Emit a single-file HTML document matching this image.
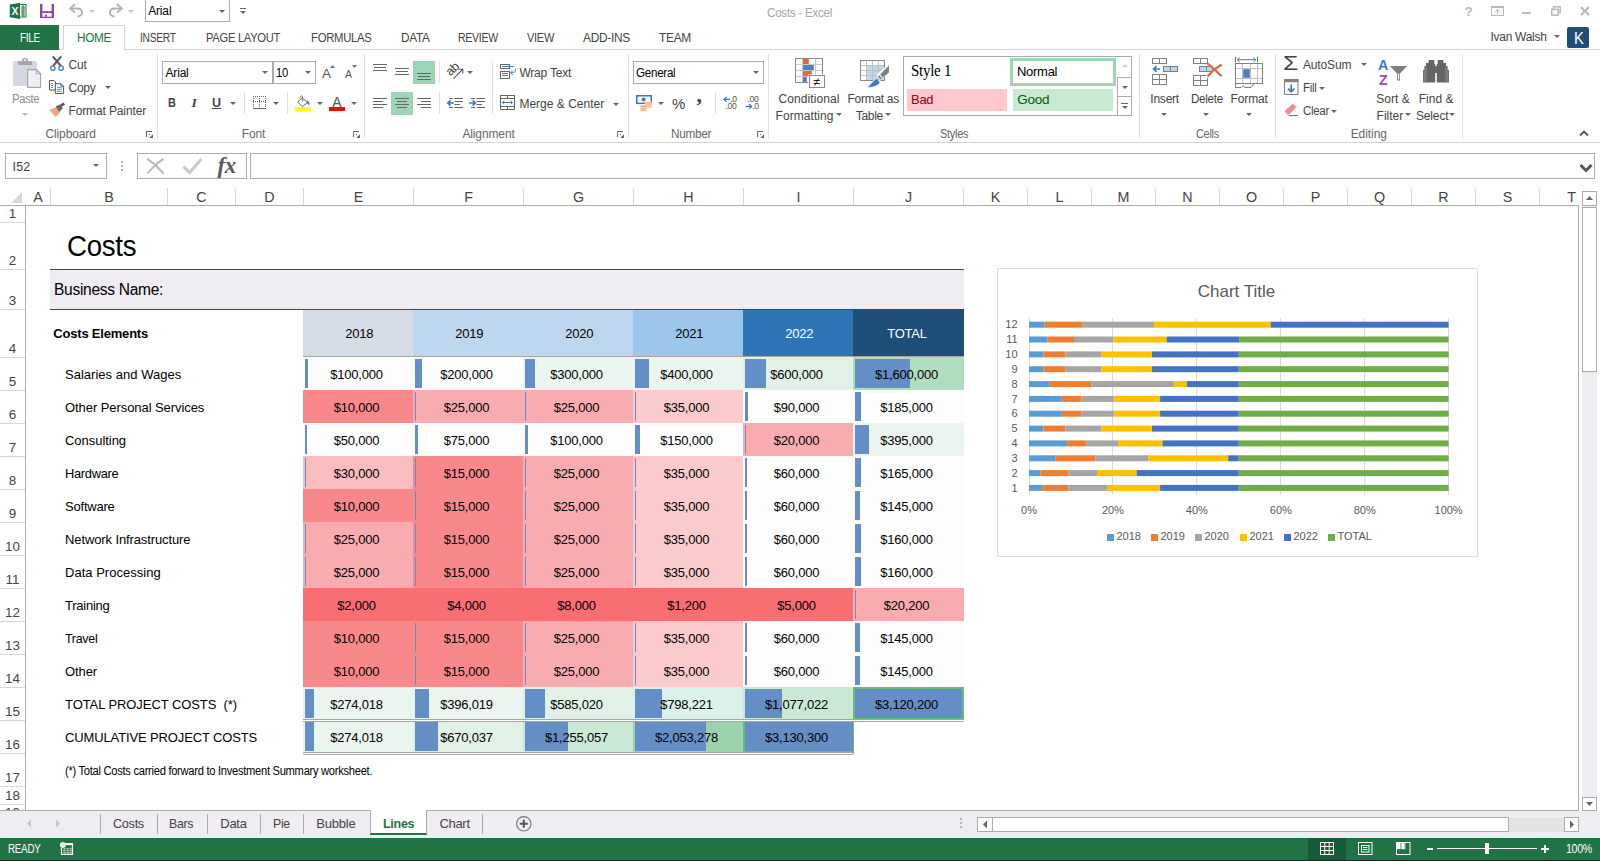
<!DOCTYPE html>
<html lang="en"><head><meta charset="utf-8"><title>Costs - Excel</title>
<style>
*{box-sizing:border-box;margin:0;padding:0}
html,body{width:1600px;height:861px;overflow:hidden;background:#fff}
body{font-family:"Liberation Sans",sans-serif;font-size:12px;color:#444}
#app{position:relative;width:1600px;height:861px;overflow:hidden;background:#fff}
.a{position:absolute}
.t{position:absolute;white-space:nowrap;line-height:1}
svg{position:absolute;overflow:visible}
/* ribbon */
.tabline{position:absolute;left:0;top:49px;width:1600px;height:1px;background:#d4d4d4}
.filetab{position:absolute;left:0;top:25px;width:59px;height:25px;background:#217346}
.hometab{position:absolute;left:63px;top:25px;width:62px;height:25px;background:#fff;border:1px solid #d4d4d4;border-bottom:none}
.ribline{position:absolute;left:0;top:142px;width:1600px;height:1px;background:#d4d4d4}
.gsep{position:absolute;top:54px;width:1px;height:85px;background:#e1e1e1}
.ssep{position:absolute;width:1px;background:#e1e1e1}
.box{position:absolute;background:#fff;border:1px solid #ababab}
.hl{position:absolute;background:#9fd5b7}
.arr{position:absolute;width:0;height:0;border-left:3px solid transparent;border-right:3px solid transparent;border-top:3px solid #6a6a6a}
/* grid */
#grid{position:absolute;left:0;top:0;width:1600px;height:861px}
.colhdr{position:absolute;left:0;top:188px;width:1579px;height:18px;border-bottom:1px solid #ababab}
.ch{position:absolute;top:0;height:17px;border-right:1px solid #d6d6d6;text-align:center;font-size:14.3px;line-height:19px;color:#444}
.corner{position:absolute;left:0;top:188px;width:26px;height:18px}
.rowhdr{position:absolute;left:0;top:0;width:26px;height:810px;border-right:1px solid #ababab;clip-path:inset(206px 0 0 0)}
.rh{position:absolute;left:0;width:25px;border-bottom:1px solid #d6d6d6;text-align:center;font-size:13.4px;color:#444}
.rh span{position:absolute;left:0;right:0;bottom:0px;line-height:17px;text-align:center}
.sheetborder-r{position:absolute;left:1578px;top:205px;width:1px;height:606px;background:#ababab}
.sheetborder-b{position:absolute;left:0;top:810px;width:1579px;height:1px;background:#ababab}
.t-costs{position:absolute;left:66px;top:229px;font-size:27px;line-height:32px;color:#000;letter-spacing:-0.3px}
.bn-band{position:absolute;left:50px;top:269px;width:914px;height:41px;background:#efedf1;border-top:1px solid #1f4e79;border-bottom:1px solid #1f4e79}
.bn-text{position:absolute;left:54px;top:279px;font-size:16px;line-height:20px;color:#000}
.cell{position:absolute}
.ce{left:53px;top:325px;font-size:13.33px;font-weight:bold;color:#000;line-height:16px}
.yh{position:absolute;top:310px;height:47px;text-align:center;font-size:13px;line-height:47px;letter-spacing:-0.2px;padding-left:1.4px}
.yh-line{position:absolute;left:303px;top:356px;width:661px;height:1px;background:#a6a6a6}
.lbl{position:absolute;left:65px;height:33px;line-height:34px;font-size:13.33px;color:#000;white-space:nowrap}
.v{position:absolute;height:34px;text-align:center;font-size:13px;line-height:36px;color:#000;letter-spacing:-0.2px}
.v i{position:absolute;left:2px;top:2px;height:29px;background:#638ec6}
.v b{position:relative;font-weight:normal;left:-2px}
.dbl{position:absolute;height:3px;border-top:1px solid #a6a6a6;border-bottom:1px solid #a6a6a6;background:#fff}
.note{position:absolute;left:65px;top:763px;font-size:12px;line-height:16px;color:#000;letter-spacing:-0.45px}
.chart .ct{font-size:11px;fill:#595959;font-family:"Liberation Sans",sans-serif}
.chart .ctitle{font-size:17px;fill:#595959;font-family:"Liberation Sans",sans-serif}

</style></head>
<body>
<div id="app">
<div id="titlebar">
<svg style="left:9px;top:2px" width="18" height="18" viewBox="0 0 18 18"><rect x="10.5" y="2.5" width="6.5" height="12.5" fill="#fff" stroke="#217346" stroke-width="1"/><path d="M12 5H16M12 7H16M12 9H16M12 11H16M12 13H16M14 3V15" stroke="#217346" stroke-width="0.9"/><path d="M0.8 2.4 L11 0.8 V16.9 L0.8 15.2 Z" fill="#217346"/><text x="6" y="12.9" text-anchor="middle" font-size="10.5" font-weight="700" fill="#fff" font-family="Liberation Sans,sans-serif">X</text></svg>
<svg style="left:40px;top:4px" width="14" height="14" viewBox="0 0 14 14"><rect x="0" y="0" width="14" height="14" fill="#8c46a5"/><rect x="2.4" y="0" width="9.2" height="7.2" fill="#fff"/><rect x="2.4" y="9" width="9.2" height="3.7" fill="#fff"/><rect x="5" y="10.8" width="2.1" height="1.9" fill="#8c46a5"/></svg>
<svg style="left:68px;top:3px" width="16" height="15" viewBox="0 0 16 15"><path d="M7 1.2 L2.2 5.4 L7 9.4" fill="none" stroke="#b4b4b4" stroke-width="2"/><path d="M2.6 5.4 H9.2 C15.6 5.4 15.6 13.4 9.4 13.4" fill="none" stroke="#b4b4b4" stroke-width="2"/></svg>
<svg style="left:108px;top:3px" width="16" height="15" viewBox="0 0 16 15"><path d="M9 1.2 L13.8 5.4 L9 9.4" fill="none" stroke="#b4b4b4" stroke-width="2"/><path d="M13.4 5.4 H6.8 C0.4 5.4 0.4 13.4 6.6 13.4" fill="none" stroke="#b4b4b4" stroke-width="2"/></svg>
<svg style="left:88.5px;top:9.5px" width="6" height="3" viewBox="0 0 6 3"><path d="M0 0H6L3 3Z" fill="#c2c2c2"/></svg>
<svg style="left:128.3px;top:9.5px" width="6" height="3" viewBox="0 0 6 3"><path d="M0 0H6L3 3Z" fill="#c2c2c2"/></svg>
<div class="box" style="left:145px;top:-1px;width:85px;height:23px"></div>
<span class="t" style="left:148.2px;top:5.4px;font-size:12px;color:#000;letter-spacing:-0.16px;">Arial</span>
<svg style="left:219.3px;top:9.5px" width="6" height="3" viewBox="0 0 6 3"><path d="M0 0H6L3 3Z" fill="#666"/></svg>
<svg style="left:240px;top:8px" width="6" height="7" viewBox="0 0 6 7"><path d="M0 0.5H6" stroke="#666" stroke-width="1"/><path d="M0 3H6L3 6Z" fill="#666"/></svg>
<span class="t" style="left:766.6px;top:7.2px;font-size:12.6px;color:#a6a6aa;letter-spacing:-0.30px;transform:scaleX(0.926);transform-origin:0 0;">Costs - Excel</span>
<span class="t" style="left:1464.6px;top:4.6px;font-size:13.5px;font-weight:700;color:#b9b9b9">?</span><svg style="left:1491px;top:6px" width="13" height="10" viewBox="0 0 13 10"><rect x="0.5" y="0.5" width="12" height="9" fill="none" stroke="#b9b9b9"/><path d="M0.5 1.2H12.5" stroke="#b9b9b9" stroke-width="1.6"/><path d="M6.5 8V3.6M4.3 5.6L6.5 3.4L8.7 5.6" fill="none" stroke="#b9b9b9" stroke-width="1"/></svg><svg style="left:1522px;top:12px" width="9" height="2" viewBox="0 0 9 2"><rect width="9" height="2" fill="#b9b9b9"/></svg><svg style="left:1551px;top:6px" width="10" height="10" viewBox="0 0 10 10"><path d="M2.5 3V0.8H9.2V6.5H7.5" fill="none" stroke="#b9b9b9" stroke-width="1.5"/><rect x="0.75" y="3.4" width="6.5" height="5.8" fill="#fff" stroke="#b9b9b9" stroke-width="1.5"/></svg><svg style="left:1580px;top:6px" width="10" height="10" viewBox="0 0 10 10"><path d="M1 1L9 9M9 1L1 9" stroke="#b9b9b9" stroke-width="2"/></svg>
</div>
<div class="tabline"></div><div class="filetab"></div><div class="hometab"></div>
<span class="t" style="left:19.5px;top:32.1px;font-size:12px;color:#fff;letter-spacing:-0.30px;transform:scaleX(0.828);transform-origin:0 0;">FILE</span>
<span class="t" style="left:76.7px;top:32.1px;font-size:12px;color:#217346;letter-spacing:-0.30px;transform:scaleX(0.980);transform-origin:0 0;">HOME</span>
<span class="t" style="left:140.2px;top:32.1px;font-size:12px;color:#444;letter-spacing:-0.30px;transform:scaleX(0.853);transform-origin:0 0;">INSERT</span>
<span class="t" style="left:206.4px;top:32.1px;font-size:12px;color:#444;letter-spacing:-0.30px;transform:scaleX(0.931);transform-origin:0 0;">PAGE LAYOUT</span>
<span class="t" style="left:310.5px;top:32.1px;font-size:12px;color:#444;letter-spacing:-0.30px;transform:scaleX(0.943);transform-origin:0 0;">FORMULAS</span>
<span class="t" style="left:400.5px;top:32.1px;font-size:12px;color:#444;letter-spacing:-0.30px;transform:scaleX(0.982);transform-origin:0 0;">DATA</span>
<span class="t" style="left:458.1px;top:32.1px;font-size:12px;color:#444;letter-spacing:-0.30px;transform:scaleX(0.876);transform-origin:0 0;">REVIEW</span>
<span class="t" style="left:527.1px;top:32.1px;font-size:12px;color:#444;letter-spacing:-0.30px;transform:scaleX(0.916);transform-origin:0 0;">VIEW</span>
<span class="t" style="left:583.0px;top:32.1px;font-size:12px;color:#444;letter-spacing:-0.30px;transform:scaleX(0.995);transform-origin:0 0;">ADD-INS</span>
<span class="t" style="left:659.1px;top:32.1px;font-size:12px;color:#444;letter-spacing:-0.30px;transform:scaleX(0.993);transform-origin:0 0;">TEAM</span>
<span class="t" style="left:1490.5px;top:30.6px;font-size:12px;color:#444;letter-spacing:-0.29px;">Ivan Walsh</span>
<svg style="left:1553.5px;top:35.0px" width="6" height="3" viewBox="0 0 6 3"><path d="M0 0H6L3 3Z" fill="#666"/></svg>
<div class="a" style="left:1567px;top:27px;width:22px;height:21px;background:#1f4e79;border-radius:2px"></div>
<span class="t" style="left:1573.5px;top:30.7px;font-size:16px;color:#fff;letter-spacing:-0.30px;transform:scaleX(0.916);transform-origin:0 0;">K</span>
<div class="ribline"></div>
<div class="gsep" style="left:157px"></div>
<div class="gsep" style="left:364px"></div>
<div class="gsep" style="left:628px"></div>
<div class="gsep" style="left:768px"></div>
<div class="gsep" style="left:1139px"></div>
<div class="gsep" style="left:1275px"></div>
<div class="gsep" style="left:1462px"></div>
<span class="t" style="left:45.5px;top:128.3px;font-size:12px;color:#666;letter-spacing:-0.13px;">Clipboard</span>
<span class="t" style="left:241.7px;top:128.3px;font-size:12px;color:#666;letter-spacing:-0.13px;">Font</span>
<span class="t" style="left:462.4px;top:128.3px;font-size:12px;color:#666;letter-spacing:-0.12px;">Alignment</span>
<span class="t" style="left:670.9px;top:128.3px;font-size:12px;color:#666;letter-spacing:-0.30px;transform:scaleX(0.981);transform-origin:0 0;">Number</span>
<span class="t" style="left:939.5px;top:128.3px;font-size:12px;color:#666;letter-spacing:-0.30px;transform:scaleX(0.913);transform-origin:0 0;">Styles</span>
<span class="t" style="left:1195.6px;top:128.3px;font-size:12px;color:#666;letter-spacing:-0.30px;transform:scaleX(0.910);transform-origin:0 0;">Cells</span>
<span class="t" style="left:1350.7px;top:128.3px;font-size:12px;color:#666;letter-spacing:-0.08px;">Editing</span>
<svg style="left:146px;top:131px" width="8" height="8" viewBox="0 0 8 8"><path d="M0.5 6V0.5H6" fill="none" stroke="#666" stroke-width="1"/><path d="M7 3.2V7H3.2Z" fill="#666"/><rect x="3" y="3" width="1" height="1" fill="#666"/></svg>
<svg style="left:353px;top:131px" width="8" height="8" viewBox="0 0 8 8"><path d="M0.5 6V0.5H6" fill="none" stroke="#666" stroke-width="1"/><path d="M7 3.2V7H3.2Z" fill="#666"/><rect x="3" y="3" width="1" height="1" fill="#666"/></svg>
<svg style="left:617px;top:131px" width="8" height="8" viewBox="0 0 8 8"><path d="M0.5 6V0.5H6" fill="none" stroke="#666" stroke-width="1"/><path d="M7 3.2V7H3.2Z" fill="#666"/><rect x="3" y="3" width="1" height="1" fill="#666"/></svg>
<svg style="left:757px;top:131px" width="8" height="8" viewBox="0 0 8 8"><path d="M0.5 6V0.5H6" fill="none" stroke="#666" stroke-width="1"/><path d="M7 3.2V7H3.2Z" fill="#666"/><rect x="3" y="3" width="1" height="1" fill="#666"/></svg>
<svg style="left:12px;top:57px" width="30" height="32" viewBox="0 0 30 32"><rect x="1" y="4" width="24" height="25" rx="1.5" fill="#d3d9e4"/><path d="M6 4.3H10.2V2.6C10.2 0.4 15.8 0.4 15.8 2.6V4.3H20V8H6Z" fill="#a6a6a6"/><circle cx="13" cy="2.9" r="1" fill="#fff"/><path d="M15.6 12.6H24.4L28.6 16.8V30.4H15.6Z" fill="#efedf1" stroke="#a6a6a6" stroke-width="1.1"/><path d="M24.4 12.6V16.8H28.6" fill="none" stroke="#a6a6a6" stroke-width="1"/></svg>
<span class="t" style="left:11.7px;top:93.1px;font-size:12px;color:#8c8c8c;letter-spacing:-0.30px;transform:scaleX(0.935);transform-origin:0 0;">Paste</span>
<svg style="left:21.5px;top:113.0px" width="6" height="3" viewBox="0 0 6 3"><path d="M0 0H6L3 3Z" fill="#b5b5b5"/></svg>
<svg style="left:49px;top:55px" width="16" height="17" viewBox="0 0 16 17"><path d="M3.8 1.4 L12 11 M12.2 1.4 L4 11" stroke="#5a5a5a" stroke-width="2"/><circle cx="3.9" cy="13.1" r="2.3" fill="#fff" stroke="#3b7fc4" stroke-width="1.2"/><circle cx="12.1" cy="13.1" r="2.3" fill="#fff" stroke="#3b7fc4" stroke-width="1.2"/></svg>
<span class="t" style="left:68.5px;top:59.3px;font-size:12px;color:#444;letter-spacing:-0.16px;">Cut</span>
<svg style="left:49px;top:80px" width="16" height="15" viewBox="0 0 16 15"><path d="M0.5 0.5H5L6.5 2V10H0.5Z" fill="#fff" stroke="#555" stroke-width="1"/><path d="M2 3.5H4M2 5.5H4M2 7.5H4" stroke="#3b7fc4" stroke-width="0.9"/><path d="M6.3 3.7H12L14.6 6.3V13.5H6.3Z" fill="#fff" stroke="#555" stroke-width="1"/><path d="M12 3.7V6.3H14.6" fill="none" stroke="#555" stroke-width="0.9"/><path d="M8 7.3H12.8M8 9.3H12.8M8 11.3H12.8" stroke="#3b7fc4" stroke-width="0.9"/></svg>
<span class="t" style="left:68.5px;top:82.2px;font-size:12px;color:#444;letter-spacing:-0.25px;">Copy</span>
<svg style="left:105.0px;top:86.0px" width="6" height="3" viewBox="0 0 6 3"><path d="M0 0H6L3 3Z" fill="#666"/></svg>
<svg style="left:48px;top:102px" width="18" height="16" viewBox="0 0 18 16"><path d="M1.2 7.8 L8.4 5.2 L12 10.6 L7.6 14.9 Z" fill="#f4a77c"/><path d="M7.6 4.2 L12.6 2.6 L14.6 6.4 L11.2 10 Z" fill="#666"/><path d="M12.2 2.4 L15.6 0.6 L17 2.8 L13.6 4.8 Z" fill="#555"/></svg>
<span class="t" style="left:68.5px;top:105.1px;font-size:12px;color:#444;letter-spacing:-0.13px;">Format Painter</span>
<div class="box" style="left:162px;top:61px;width:111px;height:23px"></div>
<div class="box" style="left:273px;top:61px;width:43px;height:23px"></div>
<span class="t" style="left:165.5px;top:66.7px;font-size:12px;color:#000;letter-spacing:-0.18px;">Arial</span>
<svg style="left:262.2px;top:71.0px" width="6" height="3" viewBox="0 0 6 3"><path d="M0 0H6L3 3Z" fill="#666"/></svg>
<span class="t" style="left:276.4px;top:66.7px;font-size:12px;color:#000;letter-spacing:-0.30px;transform:scaleX(0.933);transform-origin:0 0;">10</span>
<svg style="left:305.0px;top:71.0px" width="6" height="3" viewBox="0 0 6 3"><path d="M0 0H6L3 3Z" fill="#666"/></svg>
<span class="t" style="left:322px;top:66.5px;font-size:13.5px;color:#555">A</span><span class="t" style="left:345px;top:69.3px;font-size:10.5px;color:#555">A</span><svg style="left:330px;top:65px" width="5" height="3" viewBox="0 0 5 3"><path d="M0 3H5L2.5 0Z" fill="#4a7ebb"/></svg><svg style="left:352px;top:65px" width="5" height="3" viewBox="0 0 5 3"><path d="M0 0H5L2.5 3Z" fill="#4a7ebb"/></svg>
<span class="t" style="left:168.4px;top:96.9px;font-size:12.5px;color:#444;letter-spacing:-0.30px;font-weight:700;transform:scaleX(0.871);transform-origin:0 0;">B</span>
<span class="t" style="left:191.5px;top:96.2px;font-size:13.5px;color:#444;letter-spacing:0.75px;font-weight:700;font-style:italic;font-family:'Liberation Serif',serif;">I</span>
<span class="t" style="left:212.0px;top:96.9px;font-size:12.5px;color:#444;letter-spacing:-0.03px;font-weight:700;">U</span>
<div class="a" style="left:212px;top:108px;width:9px;height:1px;background:#444"></div>
<svg style="left:230.4px;top:102.0px" width="6" height="3" viewBox="0 0 6 3"><path d="M0 0H6L3 3Z" fill="#666"/></svg>
<div class="ssep" style="left:244px;top:92px;height:22px"></div>
<svg style="left:253px;top:96px" width="14" height="13" viewBox="0 0 14 13"><path d="M0.5 0V11M6.5 0V11M12.5 0V11M0 0.5H13M0 5.5H13" stroke="#666" stroke-width="1" stroke-dasharray="1 1"/><path d="M0 12.5H13" stroke="#666" stroke-width="1"/></svg>
<svg style="left:273.4px;top:102.0px" width="6" height="3" viewBox="0 0 6 3"><path d="M0 0H6L3 3Z" fill="#666"/></svg>
<div class="ssep" style="left:287px;top:92px;height:22px"></div>
<svg style="left:295px;top:95px" width="17" height="16" viewBox="0 0 17 16"><rect x="0" y="12" width="16" height="4" fill="#ffff00"/><path d="M7.4 3 L12.4 7.6 L7.6 11.6 L2.6 7 Z" fill="#fff" stroke="#666" stroke-width="1"/><path d="M7.6 6.6V2.2C7.6 0.4 5.4 0.4 5.4 2.2V3.4" fill="none" stroke="#666" stroke-width="0.9"/><path d="M12.6 5.6C14.4 6.6 15 8.6 14.2 10.8C13.4 9.4 12.8 8.4 11.6 8Z" fill="#3f78bf"/></svg>
<svg style="left:316.6px;top:102.0px" width="6" height="3" viewBox="0 0 6 3"><path d="M0 0H6L3 3Z" fill="#666"/></svg>
<span class="t" style="left:332.3px;top:95.2px;font-size:14px;color:#555">A</span><svg style="left:329px;top:107px" width="16" height="4" viewBox="0 0 16 4"><rect width="16" height="4" fill="#ff0000"/></svg>
<svg style="left:350.6px;top:102.0px" width="6" height="3" viewBox="0 0 6 3"><path d="M0 0H6L3 3Z" fill="#666"/></svg>
<div class="hl" style="left:413px;top:61px;width:22px;height:23px"></div>
<div class="hl" style="left:391px;top:92px;width:22px;height:23px"></div>
<svg style="left:0px;top:0px" width="1" height="1" viewBox="0 0 1 1"><rect x="373" y="64" width="14" height="1" fill="#666"/><rect x="374" y="67" width="12" height="1" fill="#666"/><rect x="373" y="70" width="14" height="1" fill="#666"/><rect x="395" y="68" width="14" height="1" fill="#666"/><rect x="396" y="71" width="12" height="1" fill="#666"/><rect x="395" y="74" width="14" height="1" fill="#666"/><rect x="417" y="73" width="14" height="1" fill="#666"/><rect x="418" y="76" width="12" height="1" fill="#666"/><rect x="417" y="79" width="14" height="1" fill="#666"/><rect x="373" y="98" width="14" height="1" fill="#666"/><rect x="373" y="101" width="10" height="1" fill="#666"/><rect x="373" y="104" width="14" height="1" fill="#666"/><rect x="373" y="107" width="10" height="1" fill="#666"/><rect x="395" y="98" width="14" height="1" fill="#666"/><rect x="397" y="101" width="10" height="1" fill="#666"/><rect x="395" y="104" width="14" height="1" fill="#666"/><rect x="397" y="107" width="10" height="1" fill="#666"/><rect x="417" y="98" width="14" height="1" fill="#666"/><rect x="421" y="101" width="10" height="1" fill="#666"/><rect x="417" y="104" width="14" height="1" fill="#666"/><rect x="421" y="107" width="10" height="1" fill="#666"/></svg>
<div class="ssep" style="left:439px;top:61px;height:22px"></div>
<div class="ssep" style="left:439px;top:92px;height:22px"></div>
<div class="ssep" style="left:492px;top:61px;height:53px"></div>
<span class="t" style="left:445.6px;top:62.6px;font-size:12.5px;color:#444;letter-spacing:-0.4px;transform:rotate(-45deg);transform-origin:50% 50%">ab</span><svg style="left:452px;top:67px" width="13" height="13" viewBox="0 0 13 13"><path d="M1.5 11.6L10.6 2.4M6.6 2.2H10.8V6.4" fill="none" stroke="#555" stroke-width="1.1"/></svg>
<svg style="left:466.5px;top:71.0px" width="6" height="3" viewBox="0 0 6 3"><path d="M0 0H6L3 3Z" fill="#666"/></svg>
<svg style="left:0px;top:0px" width="1" height="1" viewBox="0 0 1 1"><rect x="449" y="98" width="4" height="1" fill="#666"/><rect x="454.5" y="98" width="8.5" height="1" fill="#666"/><rect x="454.5" y="101" width="8.5" height="1" fill="#666"/><rect x="454.5" y="104" width="5.5" height="1" fill="#666"/><rect x="449" y="107" width="4" height="1" fill="#666"/><rect x="454.5" y="107" width="8.5" height="1" fill="#666"/><rect x="471" y="98" width="4" height="1" fill="#666"/><rect x="476.5" y="98" width="8.5" height="1" fill="#666"/><rect x="476.5" y="101" width="8.5" height="1" fill="#666"/><rect x="476.5" y="104" width="5.5" height="1" fill="#666"/><rect x="471" y="107" width="4" height="1" fill="#666"/><rect x="476.5" y="107" width="8.5" height="1" fill="#666"/><path d="M453.8 103H448.2M450.6 100.4L447.8 103L450.6 105.6" fill="none" stroke="#3f78bf" stroke-width="1.6"/><path d="M469.2 103H475M472.6 100.4L475.4 103L472.6 105.6" fill="none" stroke="#3f78bf" stroke-width="1.6"/></svg>
<svg style="left:500px;top:64px" width="17" height="15" viewBox="0 0 17 15"><rect x="0.5" y="0.5" width="9" height="4" fill="#fff" stroke="#666"/><rect x="0.5" y="7.5" width="9" height="7" fill="#fff" stroke="#666"/><path d="M2 2.5H13.8M2 9.5H8M2 11.5H8" stroke="#3f78bf" stroke-width="1"/><path d="M15.6 4.6C15.8 8 14 8.8 10.8 8.8M12.8 6.6L10.6 8.8L12.8 11" fill="none" stroke="#3f78bf" stroke-width="1"/></svg>
<span class="t" style="left:519.4px;top:67.3px;font-size:12px;color:#444;letter-spacing:-0.20px;">Wrap Text</span>
<svg style="left:500px;top:95px" width="15" height="15" viewBox="0 0 15 15"><rect x="0.5" y="0.5" width="14" height="14" fill="#fff" stroke="#666"/><path d="M0 3.5H15M0 11.5H15M7.5 0V3.5M7.5 11.5V15" stroke="#666" stroke-width="1"/><path d="M2.4 7.5H12.6M4.2 5.7L2.4 7.5L4.2 9.3M10.8 5.7L12.6 7.5L10.8 9.3" fill="none" stroke="#3f78bf" stroke-width="1"/></svg>
<span class="t" style="left:519.4px;top:98.2px;font-size:12px;color:#444;letter-spacing:0.01px;">Merge &amp; Center</span>
<svg style="left:613.3px;top:102.5px" width="6" height="3" viewBox="0 0 6 3"><path d="M0 0H6L3 3Z" fill="#666"/></svg>
<div class="box" style="left:633px;top:61px;width:131px;height:23px"></div>
<span class="t" style="left:636.4px;top:66.7px;font-size:12px;color:#000;letter-spacing:-0.30px;transform:scaleX(0.971);transform-origin:0 0;">General</span>
<svg style="left:753.3px;top:71.0px" width="6" height="3" viewBox="0 0 6 3"><path d="M0 0H6L3 3Z" fill="#666"/></svg>
<svg style="left:636px;top:95px" width="17" height="17" viewBox="0 0 17 17"><rect x="0.75" y="0.75" width="14.5" height="7.6" fill="#fff" stroke="#3f78bf" stroke-width="1.5"/><path d="M0 0H3L0 3ZM16 0H13L16 3ZM0 9H3L0 6Z" fill="#3f78bf"/><circle cx="7.6" cy="4.4" r="2" fill="#3f78bf"/><g fill="#f4a77c" stroke="#fff" stroke-width="0.5"><ellipse cx="12.4" cy="11.4" rx="3.6" ry="1.3"/><ellipse cx="12.4" cy="9.6" rx="3.6" ry="1.3"/><ellipse cx="12.4" cy="7.8" rx="3.6" ry="1.3"/><ellipse cx="7.6" cy="14.9" rx="3.6" ry="1.3"/><ellipse cx="7.6" cy="13.1" rx="3.6" ry="1.3"/><ellipse cx="7.6" cy="11.3" rx="3.6" ry="1.3"/></g></svg>
<svg style="left:657.5px;top:102.0px" width="6" height="3" viewBox="0 0 6 3"><path d="M0 0H6L3 3Z" fill="#666"/></svg>
<span class="t" style="left:672.0px;top:96.0px;font-size:15px;color:#444;letter-spacing:-0.30px;transform:scaleX(0.997);transform-origin:0 0;">%</span>
<span class="t" style="left:696.5px;top:84.1px;font-size:22px;color:#444;font-weight:700;font-family:'Liberation Serif',serif;">,</span>
<div class="ssep" style="left:715px;top:92px;height:22px"></div>
<span class="t" style="left:730.2px;top:95px;font-size:8.6px;color:#555;letter-spacing:-0.3px">.0</span><span class="t" style="left:725.5px;top:102.2px;font-size:8.6px;color:#555;letter-spacing:-0.3px">.00</span><span class="t" style="left:747.4px;top:95px;font-size:8.6px;color:#555;letter-spacing:-0.3px">.00</span><span class="t" style="left:752.2px;top:102.2px;font-size:8.6px;color:#555;letter-spacing:-0.3px">.0</span><svg style="left:723px;top:96px" width="8" height="7" viewBox="0 0 8 7"><path d="M7 3.4H1.2M3.6 0.9L1 3.4L3.6 5.9" fill="none" stroke="#3f78bf" stroke-width="1.3"/></svg><svg style="left:744.5px;top:103px" width="8" height="7" viewBox="0 0 8 7"><path d="M0.6 3.4H6.4M4 0.9L6.6 3.4L4 5.9" fill="none" stroke="#3f78bf" stroke-width="1.3"/></svg>
<svg style="left:795px;top:58px" width="31" height="31" viewBox="0 0 31 31"><rect x="0.5" y="0.5" width="27" height="24" fill="#fff" stroke="#8a8a8a"/><path d="M7.5 1V24M20.5 1V24M1 6.5H27M1 12.5H27M1 18.5H27" stroke="#c8c8c8" stroke-width="1"/><rect x="8" y="1" width="5.8" height="5" fill="#de6a45"/><rect x="8" y="7" width="10.8" height="5" fill="#4e81bd"/><rect x="8" y="13" width="9" height="5" fill="#de6a45"/><rect x="8" y="19" width="3.8" height="5" fill="#4e81bd"/><rect x="13.4" y="16.4" width="17.2" height="14" fill="#fff"/><rect x="14.5" y="17.5" width="15" height="12" fill="#fff" stroke="#8a8a8a"/><text x="22" y="27.6" text-anchor="middle" font-size="12.5" fill="#222" font-family="Liberation Sans,DejaVu Sans,sans-serif">≠</text></svg>
<span class="t" style="left:778.5px;top:93.3px;font-size:12px;color:#444;letter-spacing:0.08px;">Conditional</span>
<span class="t" style="left:775.5px;top:109.7px;font-size:12px;color:#444;letter-spacing:0.07px;">Formatting</span>
<svg style="left:836.4px;top:113.0px" width="6" height="3" viewBox="0 0 6 3"><path d="M0 0H6L3 3Z" fill="#666"/></svg>
<svg style="left:860px;top:60px" width="31" height="29" viewBox="0 0 31 29"><rect x="6.5" y="5.5" width="18" height="15" fill="#bdd7ee"/><path d="M6.5 0.5V20.5M12.5 0.5V20.5M18.5 0.5V20.5M0.5 5.5H24.5M0.5 10.5H24.5M0.5 15.5H24.5" stroke="#c0c0c0" stroke-width="1"/><rect x="0.5" y="0.5" width="24" height="20" fill="none" stroke="#8a8a8a"/><path d="M29 3.4V13.6L20.8 19.4L16.4 15Z" fill="#fff"/><path d="M29 5.4L18 16.6L20.6 19.4L29 12.6Z" fill="#808080"/><path d="M19.6 14.6L22.6 17.8" stroke="#fff" stroke-width="1.2"/><path d="M17 18C20 17.6 21.2 20.6 19.4 23.4C17 26.6 11.4 27.6 6.2 27.6C10.6 25.4 13 20 17 18Z" fill="#3f78bf" stroke="#fff" stroke-width="0.8"/><path d="M17.6 19.6C19 19.6 19.6 20.6 19.4 21.8" fill="none" stroke="#fff" stroke-width="1.1"/></svg>
<span class="t" style="left:847.6px;top:93.3px;font-size:12px;color:#444;letter-spacing:-0.30px;transform:scaleX(1.000);transform-origin:0 0;">Format as</span>
<span class="t" style="left:855.7px;top:109.7px;font-size:12px;color:#444;letter-spacing:-0.28px;">Table</span>
<svg style="left:885.4px;top:113.0px" width="6" height="3" viewBox="0 0 6 3"><path d="M0 0H6L3 3Z" fill="#666"/></svg>
<div class="box" style="left:903px;top:56px;width:229px;height:60px"></div>
<div class="a" style="left:1117px;top:57px;width:14px;height:58px;background:#fff"></div>
<div class="a" style="left:1117px;top:77px;width:15px;height:20px;border:1px solid #ababab"></div>
<div class="a" style="left:1117px;top:96px;width:15px;height:20px;border:1px solid #ababab"></div>
<span class="arr" style="left:1121.5px;top:64px;border-top:none;border-bottom:3px solid #cfcfcf;border-left-width:3px;border-right-width:3px"></span>
<svg style="left:1121.5px;top:85.5px" width="6" height="3" viewBox="0 0 6 3"><path d="M0 0H6L3 3Z" fill="#666"/></svg>
<div class="a" style="left:1121px;top:103px;width:7px;height:1px;background:#666"></div>
<svg style="left:1121.5px;top:105.5px" width="6" height="3" viewBox="0 0 6 3"><path d="M0 0H6L3 3Z" fill="#666"/></svg>
<span class="t" style="left:911.4px;top:63.3px;font-size:16px;color:#000;letter-spacing:-0.30px;font-family:'Liberation Serif',serif;transform:scaleX(0.939);transform-origin:0 0;">Style 1</span>
<div class="a" style="left:1010px;top:58px;width:106px;height:28px;border:3px solid #9fd5b7;background:#fff"></div>
<span class="t" style="left:1017.3px;top:65.3px;font-size:13.5px;color:#000;letter-spacing:-0.30px;transform:scaleX(0.964);transform-origin:0 0;">Normal</span>
<div class="a" style="left:907px;top:89px;width:100px;height:22px;background:#ffc7ce"></div>
<span class="t" style="left:911.0px;top:93.2px;font-size:13.5px;color:#9c0006;letter-spacing:-0.30px;transform:scaleX(0.964);transform-origin:0 0;">Bad</span>
<div class="a" style="left:1013px;top:89px;width:100px;height:22px;background:#c8ead2"></div>
<span class="t" style="left:1017.3px;top:93.2px;font-size:13.5px;color:#006100;letter-spacing:-0.23px;">Good</span>
<svg style="left:1152px;top:58px" width="27" height="28" viewBox="0 0 27 28"><rect x="0.5" y="0.5" width="14" height="5" fill="#fff" stroke="#808080"/><path d="M7.5 0V6" stroke="#808080"/><rect x="11.5" y="8.5" width="14" height="5" fill="#bdd7ee" stroke="#808080"/><path d="M18.5 8V14" stroke="#808080"/><rect x="0.5" y="16.5" width="14" height="10" fill="#fff" stroke="#808080"/><path d="M7.5 16V27" stroke="#808080"/><path d="M0 21.5H15" stroke="#808080"/><path d="M8 11H1.8M4.6 8.2L1.6 11L4.6 13.8" fill="none" stroke="#3f78bf" stroke-width="1.7"/></svg>
<span class="t" style="left:1150.3px;top:93.4px;font-size:12px;color:#444;letter-spacing:-0.22px;">Insert</span>
<svg style="left:1161.0px;top:113.0px" width="6" height="3" viewBox="0 0 6 3"><path d="M0 0H6L3 3Z" fill="#666"/></svg>
<svg style="left:1193px;top:58px" width="30" height="29" viewBox="0 0 30 29"><rect x="0.5" y="0.5" width="14" height="5" fill="#fff" stroke="#808080"/><path d="M7.5 0V6" stroke="#808080"/><rect x="6.5" y="8.5" width="13" height="5" fill="#bdd7ee" stroke="#808080"/><path d="M13.5 8V14" stroke="#808080"/><rect x="0.5" y="17.5" width="14" height="10" fill="#fff" stroke="#808080"/><path d="M7.5 17V28" stroke="#808080"/><path d="M0 22.5H15" stroke="#808080"/><path d="M13 14H22V20H13Z" fill="#fff"/><path d="M14.6 5.6C19 9 24 13.4 28.6 18.2M28.6 6.4C23.4 9.4 18.4 13.6 14.4 18.4" fill="none" stroke="#dc6a48" stroke-width="2.3"/></svg>
<span class="t" style="left:1190.7px;top:93.4px;font-size:12px;color:#444;letter-spacing:-0.30px;transform:scaleX(0.967);transform-origin:0 0;">Delete</span>
<svg style="left:1203.0px;top:113.0px" width="6" height="3" viewBox="0 0 6 3"><path d="M0 0H6L3 3Z" fill="#666"/></svg>
<svg style="left:1235px;top:56px" width="29" height="33" viewBox="0 0 29 33"><path d="M0.5 1V6.4M22.5 1V6.4M2.4 3.7H20.6M4.6 1.5L2.2 3.7L4.6 5.9M18.4 1.5L20.8 3.7L18.4 5.9" fill="none" stroke="#3f78bf" stroke-width="1"/><rect x="0.5" y="7.5" width="27" height="20" fill="#fff" stroke="#808080"/><path d="M7.5 8V27M15.5 8V27M22.5 8V27M1 12.5H27M1 22.5H27" stroke="#c0c0c0" stroke-width="1"/><rect x="8.2" y="13.2" width="6.6" height="8.6" fill="#4a7ebb"/><path d="M0.5 27.5V31.5H6.5L8.5 29.5L9.5 31.5H16L18.5 28" fill="none" stroke="#808080" stroke-width="1"/></svg>
<span class="t" style="left:1230.6px;top:93.4px;font-size:12px;color:#444;letter-spacing:-0.13px;">Format</span>
<svg style="left:1246.3px;top:113.0px" width="6" height="3" viewBox="0 0 6 3"><path d="M0 0H6L3 3Z" fill="#666"/></svg>
<span class="t" style="left:1282.6px;top:52px;font-size:21px;color:#444;transform:scale(1.18,.98);transform-origin:0 0">Σ</span>
<span class="t" style="left:1302.9px;top:58.8px;font-size:12px;color:#444;letter-spacing:-0.14px;">AutoSum</span>
<svg style="left:1361.0px;top:63.3px" width="6" height="3" viewBox="0 0 6 3"><path d="M0 0H6L3 3Z" fill="#666"/></svg>
<svg style="left:1284px;top:79px" width="15" height="16" viewBox="0 0 15 16"><rect x="0.5" y="0.5" width="13.5" height="15" fill="#fff" stroke="#808080"/><rect x="0" y="0" width="14.5" height="3.2" fill="#808080"/><path d="M7.2 5.4V12.6M4 9.6L7.2 12.8L10.4 9.6" fill="none" stroke="#3f78bf" stroke-width="1.7"/></svg>
<span class="t" style="left:1302.9px;top:81.8px;font-size:12px;color:#444;letter-spacing:-0.30px;transform:scaleX(0.948);transform-origin:0 0;">Fill</span>
<svg style="left:1319.4px;top:86.5px" width="6" height="3" viewBox="0 0 6 3"><path d="M0 0H6L3 3Z" fill="#666"/></svg>
<svg style="left:1284px;top:103px" width="15" height="14" viewBox="0 0 15 14"><path d="M0.7 8 L8.6 0.7 L12.6 4.1 L5.2 11.4 Z" fill="#f28b94"/><path d="M1.4 9.2L4.6 12.2" stroke="#e06a76" stroke-width="1"/><path d="M5 12.6H14" stroke="#666" stroke-width="1"/></svg>
<span class="t" style="left:1302.9px;top:104.7px;font-size:12px;color:#444;letter-spacing:-0.30px;transform:scaleX(0.953);transform-origin:0 0;">Clear</span>
<svg style="left:1331.3px;top:109.5px" width="6" height="3" viewBox="0 0 6 3"><path d="M0 0H6L3 3Z" fill="#666"/></svg>
<span class="t" style="left:1378px;top:57.2px;font-size:15.5px;font-weight:700;color:#3f78bf;transform:scaleX(.92);transform-origin:0 0">A</span><span class="t" style="left:1379px;top:71.6px;font-size:15.5px;font-weight:700;color:#9b4fb5;transform:scaleX(.92);transform-origin:0 0">Z</span><svg style="left:1389px;top:65px" width="19" height="17" viewBox="0 0 19 17"><path d="M0.8 1H18.2L11 8.6V15.6H8V8.6Z" fill="#808080"/><rect x="8.9" y="8.6" width="1.2" height="6" fill="#fff"/></svg>
<span class="t" style="left:1376.2px;top:93.4px;font-size:12px;color:#444;letter-spacing:0.04px;">Sort &amp;</span>
<span class="t" style="left:1376.6px;top:109.7px;font-size:12px;color:#444;letter-spacing:-0.01px;">Filter</span>
<svg style="left:1404.6px;top:113.0px" width="6" height="3" viewBox="0 0 6 3"><path d="M0 0H6L3 3Z" fill="#666"/></svg>
<svg style="left:1423px;top:60px" width="26" height="23" viewBox="0 0 26 23"><path d="M5.6 0H11.4V4H12.2V22.6H0V10H1.4V6H3V3H5.6ZM14.6 0H20.4V3H23V6H24.6V10H26V22.6H13.8V4H14.6Z" fill="#666"/><rect x="11.6" y="6" width="2.8" height="7" fill="#666"/><path d="M1.2 11V21.6M3 7V21.6M24.8 11V21.6M23 7V21.6" stroke="#9a9a9a" stroke-width="0.8"/></svg>
<span class="t" style="left:1418.7px;top:93.4px;font-size:12px;color:#444;letter-spacing:0.05px;">Find &amp;</span>
<span class="t" style="left:1416.0px;top:109.7px;font-size:12px;color:#444;letter-spacing:-0.16px;">Select</span>
<svg style="left:1449.3px;top:113.0px" width="6" height="3" viewBox="0 0 6 3"><path d="M0 0H6L3 3Z" fill="#666"/></svg>
<svg style="left:1579px;top:130px" width="10" height="7" viewBox="0 0 10 7"><path d="M1 5.5 L5 1.5 L9 5.5" fill="none" stroke="#555" stroke-width="1.8"/></svg>
<div class="box" style="left:5px;top:153px;width:102px;height:26px"></div>
<span class="t" style="left:12.5px;top:161.3px;font-size:12.5px;color:#444;letter-spacing:0.21px;">I52</span>
<svg style="left:93.0px;top:163.5px" width="6" height="3" viewBox="0 0 6 3"><path d="M0 0H6L3 3Z" fill="#666"/></svg>
<div class="a" style="left:121px;top:161px;width:2px;height:2px;background:#b0b0b0;box-shadow:0 4px 0 #b0b0b0,0 8px 0 #b0b0b0"></div>
<div class="box" style="left:137px;top:153px;width:110px;height:26px"></div>
<svg style="left:146px;top:157px" width="20" height="18" viewBox="0 0 20 18"><path d="M1.4 16.4C5.6 11.6 10.6 6.2 17.4 1.8M1.2 1.6C7 5.6 12.6 10.6 17.6 16.6" fill="none" stroke="#b9b9b9" stroke-width="2"/></svg><svg style="left:182px;top:157px" width="21" height="18" viewBox="0 0 21 18"><path d="M1.4 9.6L7.6 15.6L19.4 2" fill="none" stroke="#c9c9c9" stroke-width="3"/></svg><span class="t" style="left:217.6px;top:153.6px;font-size:23px;color:#5a5a5a;font-family:'Liberation Serif',serif;font-style:italic;font-weight:700;letter-spacing:-0.6px">fx</span>
<div class="box" style="left:250px;top:153px;width:1345px;height:26px"></div>
<svg style="left:1579px;top:162.5px" width="14" height="10" viewBox="0 0 14 10"><path d="M1.5 2 L7 7.5 L12.5 2" fill="none" stroke="#555" stroke-width="3"/></svg>
<div id="grid">
<div class="colhdr">
<div class="ch" style="left:26px;width:25px">A</div>
<div class="ch" style="left:51px;width:117px">B</div>
<div class="ch" style="left:168px;width:68px">C</div>
<div class="ch" style="left:236px;width:68px">D</div>
<div class="ch" style="left:304px;width:110px">E</div>
<div class="ch" style="left:414px;width:110px">F</div>
<div class="ch" style="left:524px;width:110px">G</div>
<div class="ch" style="left:634px;width:110px">H</div>
<div class="ch" style="left:744px;width:110px">I</div>
<div class="ch" style="left:854px;width:110px">J</div>
<div class="ch" style="left:964px;width:64px">K</div>
<div class="ch" style="left:1028px;width:64px">L</div>
<div class="ch" style="left:1092px;width:64px">M</div>
<div class="ch" style="left:1156px;width:64px">N</div>
<div class="ch" style="left:1220px;width:64px">O</div>
<div class="ch" style="left:1284px;width:64px">P</div>
<div class="ch" style="left:1348px;width:64px">Q</div>
<div class="ch" style="left:1412px;width:64px">R</div>
<div class="ch" style="left:1476px;width:64px">S</div>
<div class="ch" style="left:1540px;width:40px;text-align:right;border-right:none"><span style="padding-right:4px">T</span></div>
</div>
<div class="corner"><svg width="26" height="18" viewBox="0 0 26 18"><path d="M22 4 L22 15 L11 15 Z" fill="#d8d8d8"/></svg></div>
<div class="rowhdr">
<div class="rh" style="top:206px;height:17px"><span>1</span></div>
<div class="rh" style="top:223px;height:47px"><span>2</span></div>
<div class="rh" style="top:270px;height:40px"><span>3</span></div>
<div class="rh" style="top:310px;height:48px"><span>4</span></div>
<div class="rh" style="top:358px;height:33px"><span>5</span></div>
<div class="rh" style="top:391px;height:33px"><span>6</span></div>
<div class="rh" style="top:424px;height:33px"><span>7</span></div>
<div class="rh" style="top:457px;height:33px"><span>8</span></div>
<div class="rh" style="top:490px;height:33px"><span>9</span></div>
<div class="rh" style="top:523px;height:33px"><span>10</span></div>
<div class="rh" style="top:556px;height:33px"><span>11</span></div>
<div class="rh" style="top:589px;height:33px"><span>12</span></div>
<div class="rh" style="top:622px;height:33px"><span>13</span></div>
<div class="rh" style="top:655px;height:33px"><span>14</span></div>
<div class="rh" style="top:688px;height:33px"><span>15</span></div>
<div class="rh" style="top:721px;height:33px"><span>16</span></div>
<div class="rh" style="top:754px;height:33px"><span>17</span></div>
<div class="rh" style="top:787px;height:18px"><span>18</span></div>
<div class="rh" style="top:805px;height:17px"><span>19</span></div>
</div>
<div class="sheetborder-r"></div><div class="sheetborder-b"></div>
<span class="t" style="left:67.0px;top:231.6px;font-size:28.6px;color:#000;letter-spacing:-0.30px;transform:scaleX(0.968);transform-origin:0 0;">Costs</span>
<div class="bn-band"></div>
<span class="t" style="left:54.2px;top:282.1px;font-size:15.6px;color:#000;letter-spacing:-0.30px;transform:scaleX(0.997);transform-origin:0 0;">Business Name:</span>
<span class="t" style="left:53.3px;top:326.6px;font-size:13px;color:#000;letter-spacing:-0.20px;font-weight:700;">Costs Elements</span>
<div class="yh" style="left:303px;width:111px;background:#d6dce5;color:#000">2018</div>
<div class="yh" style="left:413px;width:111px;background:#bdd7ee;color:#000">2019</div>
<div class="yh" style="left:523px;width:111px;background:#bdd7ee;color:#000">2020</div>
<div class="yh" style="left:633px;width:111px;background:#9cc6ea;color:#000">2021</div>
<div class="yh" style="left:743px;width:111px;background:#2e75b6;color:#fff">2022</div>
<div class="yh" style="left:853px;width:111px;background:#1f4e79;color:#fff;padding-left:0;padding-right:3px">TOTAL</div>
<div class="yh-line"></div>
<span class="t" style="left:65.0px;top:367.8px;font-size:13px;color:#000;letter-spacing:0.02px;">Salaries and Wages</span>
<div class="v" style="left:303px;top:357px;width:111px;background:#fdfdfd"><i style="width:3.4px"></i><b>$100,000</b></div>
<div class="v" style="left:413px;top:357px;width:111px;background:#fdfdfd"><i style="width:6.9px"></i><b>$200,000</b></div>
<div class="v" style="left:523px;top:357px;width:111px;background:#ebf5f0"><i style="width:10.3px"></i><b>$300,000</b></div>
<div class="v" style="left:633px;top:357px;width:111px;background:#ebf5f0"><i style="width:13.7px"></i><b>$400,000</b></div>
<div class="v" style="left:743px;top:357px;width:111px;background:#e1f1e7"><i style="width:20.6px"></i><b>$600,000</b></div>
<div class="v" style="left:853px;top:357px;width:111px;background:#b0ddbd"><i style="width:54.9px"></i><b>$1,600,000</b></div>
<span class="t" style="left:65.0px;top:400.8px;font-size:13px;color:#000;letter-spacing:-0.07px;">Other Personal Services</span>
<div class="v" style="left:303px;top:390px;width:111px;background:#f8888a"><b>$10,000</b></div>
<div class="v" style="left:413px;top:390px;width:111px;background:#f8acaf"><i style="width:0.9px"></i><b>$25,000</b></div>
<div class="v" style="left:523px;top:390px;width:111px;background:#f8acaf"><i style="width:0.9px"></i><b>$25,000</b></div>
<div class="v" style="left:633px;top:390px;width:111px;background:#fbcacd"><i style="width:1.2px"></i><b>$35,000</b></div>
<div class="v" style="left:743px;top:390px;width:111px;background:#fdfdfd"><i style="width:3.1px"></i><b>$90,000</b></div>
<div class="v" style="left:853px;top:390px;width:111px;background:#fdfdfd"><i style="width:6.4px"></i><b>$185,000</b></div>
<span class="t" style="left:65.0px;top:433.8px;font-size:13px;color:#000;letter-spacing:-0.04px;">Consulting</span>
<div class="v" style="left:303px;top:423px;width:111px;background:#fdfdfd"><i style="width:1.7px"></i><b>$50,000</b></div>
<div class="v" style="left:413px;top:423px;width:111px;background:#fdfdfd"><i style="width:2.6px"></i><b>$75,000</b></div>
<div class="v" style="left:523px;top:423px;width:111px;background:#fdfdfd"><i style="width:3.4px"></i><b>$100,000</b></div>
<div class="v" style="left:633px;top:423px;width:111px;background:#fdfdfd"><i style="width:5.2px"></i><b>$150,000</b></div>
<div class="v" style="left:743px;top:423px;width:111px;background:#f8acaf"><i style="width:0.7px"></i><b>$20,000</b></div>
<div class="v" style="left:853px;top:423px;width:111px;background:#ebf5f0"><i style="width:13.6px"></i><b>$395,000</b></div>
<span class="t" style="left:65.0px;top:466.8px;font-size:13px;color:#000;letter-spacing:-0.30px;transform:scaleX(0.988);transform-origin:0 0;">Hardware</span>
<div class="v" style="left:303px;top:456px;width:111px;background:#f9bcbf"><i style="width:1.0px"></i><b>$30,000</b></div>
<div class="v" style="left:413px;top:456px;width:111px;background:#f8888a"><i style="width:0.5px"></i><b>$15,000</b></div>
<div class="v" style="left:523px;top:456px;width:111px;background:#f8acaf"><i style="width:0.9px"></i><b>$25,000</b></div>
<div class="v" style="left:633px;top:456px;width:111px;background:#fbcacd"><i style="width:1.2px"></i><b>$35,000</b></div>
<div class="v" style="left:743px;top:456px;width:111px;background:#fdfdfd"><i style="width:2.1px"></i><b>$60,000</b></div>
<div class="v" style="left:853px;top:456px;width:111px;background:#fdfdfd"><i style="width:5.7px"></i><b>$165,000</b></div>
<span class="t" style="left:65.0px;top:499.8px;font-size:13px;color:#000;letter-spacing:-0.21px;">Software</span>
<div class="v" style="left:303px;top:489px;width:111px;background:#f8888a"><b>$10,000</b></div>
<div class="v" style="left:413px;top:489px;width:111px;background:#f8888a"><i style="width:0.5px"></i><b>$15,000</b></div>
<div class="v" style="left:523px;top:489px;width:111px;background:#f8acaf"><i style="width:0.9px"></i><b>$25,000</b></div>
<div class="v" style="left:633px;top:489px;width:111px;background:#fbcacd"><i style="width:1.2px"></i><b>$35,000</b></div>
<div class="v" style="left:743px;top:489px;width:111px;background:#fdfdfd"><i style="width:2.1px"></i><b>$60,000</b></div>
<div class="v" style="left:853px;top:489px;width:111px;background:#fdfdfd"><i style="width:5.0px"></i><b>$145,000</b></div>
<span class="t" style="left:65.0px;top:532.8px;font-size:13px;color:#000;letter-spacing:-0.11px;">Network Infrastructure</span>
<div class="v" style="left:303px;top:522px;width:111px;background:#f8acaf"><i style="width:0.9px"></i><b>$25,000</b></div>
<div class="v" style="left:413px;top:522px;width:111px;background:#f8888a"><i style="width:0.5px"></i><b>$15,000</b></div>
<div class="v" style="left:523px;top:522px;width:111px;background:#f8acaf"><i style="width:0.9px"></i><b>$25,000</b></div>
<div class="v" style="left:633px;top:522px;width:111px;background:#fbcacd"><i style="width:1.2px"></i><b>$35,000</b></div>
<div class="v" style="left:743px;top:522px;width:111px;background:#fdfdfd"><i style="width:2.1px"></i><b>$60,000</b></div>
<div class="v" style="left:853px;top:522px;width:111px;background:#fdfdfd"><i style="width:5.5px"></i><b>$160,000</b></div>
<span class="t" style="left:65.0px;top:565.8px;font-size:13px;color:#000;letter-spacing:0.02px;">Data Processing</span>
<div class="v" style="left:303px;top:555px;width:111px;background:#f8acaf"><i style="width:0.9px"></i><b>$25,000</b></div>
<div class="v" style="left:413px;top:555px;width:111px;background:#f8888a"><i style="width:0.5px"></i><b>$15,000</b></div>
<div class="v" style="left:523px;top:555px;width:111px;background:#f8acaf"><i style="width:0.9px"></i><b>$25,000</b></div>
<div class="v" style="left:633px;top:555px;width:111px;background:#fbcacd"><i style="width:1.2px"></i><b>$35,000</b></div>
<div class="v" style="left:743px;top:555px;width:111px;background:#fdfdfd"><i style="width:2.1px"></i><b>$60,000</b></div>
<div class="v" style="left:853px;top:555px;width:111px;background:#fdfdfd"><i style="width:5.5px"></i><b>$160,000</b></div>
<span class="t" style="left:65.0px;top:598.8px;font-size:13px;color:#000;letter-spacing:-0.24px;">Training</span>
<div class="v" style="left:303px;top:588px;width:111px;background:#f86f72"><b>$2,000</b></div>
<div class="v" style="left:413px;top:588px;width:111px;background:#f86f72"><b>$4,000</b></div>
<div class="v" style="left:523px;top:588px;width:111px;background:#f86f72"><b>$8,000</b></div>
<div class="v" style="left:633px;top:588px;width:111px;background:#f86f72"><b>$1,200</b></div>
<div class="v" style="left:743px;top:588px;width:111px;background:#f86f72"><b>$5,000</b></div>
<div class="v" style="left:853px;top:588px;width:111px;background:#f8acaf"><i style="width:0.7px"></i><b>$20,200</b></div>
<span class="t" style="left:65.0px;top:631.8px;font-size:13px;color:#000;letter-spacing:-0.30px;transform:scaleX(0.958);transform-origin:0 0;">Travel</span>
<div class="v" style="left:303px;top:621px;width:111px;background:#f8888a"><b>$10,000</b></div>
<div class="v" style="left:413px;top:621px;width:111px;background:#f8888a"><i style="width:0.5px"></i><b>$15,000</b></div>
<div class="v" style="left:523px;top:621px;width:111px;background:#f8acaf"><i style="width:0.9px"></i><b>$25,000</b></div>
<div class="v" style="left:633px;top:621px;width:111px;background:#fbcacd"><i style="width:1.2px"></i><b>$35,000</b></div>
<div class="v" style="left:743px;top:621px;width:111px;background:#fdfdfd"><i style="width:2.1px"></i><b>$60,000</b></div>
<div class="v" style="left:853px;top:621px;width:111px;background:#fdfdfd"><i style="width:5.0px"></i><b>$145,000</b></div>
<span class="t" style="left:65.0px;top:664.8px;font-size:13px;color:#000;letter-spacing:-0.10px;">Other</span>
<div class="v" style="left:303px;top:654px;width:111px;background:#f8888a"><b>$10,000</b></div>
<div class="v" style="left:413px;top:654px;width:111px;background:#f8888a"><i style="width:0.5px"></i><b>$15,000</b></div>
<div class="v" style="left:523px;top:654px;width:111px;background:#f8acaf"><i style="width:0.9px"></i><b>$25,000</b></div>
<div class="v" style="left:633px;top:654px;width:111px;background:#fbcacd"><i style="width:1.2px"></i><b>$35,000</b></div>
<div class="v" style="left:743px;top:654px;width:111px;background:#fdfdfd"><i style="width:2.1px"></i><b>$60,000</b></div>
<div class="v" style="left:853px;top:654px;width:111px;background:#fdfdfd"><i style="width:5.0px"></i><b>$145,000</b></div>
<span class="t" style="left:65.0px;top:697.8px;font-size:13px;color:#000;letter-spacing:-0.07px;">TOTAL PROJECT COSTS  (*)</span>
<div class="v" style="left:303px;top:687px;width:111px;background:#ebf5f0"><i style="width:9.4px"></i><b>$274,018</b></div>
<div class="v" style="left:413px;top:687px;width:111px;background:#ebf5f0"><i style="width:13.6px"></i><b>$396,019</b></div>
<div class="v" style="left:523px;top:687px;width:111px;background:#e1f1e7"><i style="width:20.1px"></i><b>$585,020</b></div>
<div class="v" style="left:633px;top:687px;width:111px;background:#daf2ea"><i style="width:27.4px"></i><b>$798,221</b></div>
<div class="v" style="left:743px;top:687px;width:111px;background:#cae9d5"><i style="width:37.0px"></i><b>$1,077,022</b></div>
<div class="v" style="left:853px;top:687px;width:111px;background:#63be7b"><i style="width:107.2px"></i><b>$3,120,200</b></div>
<span class="t" style="left:65.0px;top:730.8px;font-size:13px;color:#000;letter-spacing:-0.13px;">CUMULATIVE PROJECT COSTS</span>
<div class="v" style="left:303px;top:720px;width:111px;background:#ebf5f0"><i style="width:9.4px"></i><b>$274,018</b></div>
<div class="v" style="left:413px;top:720px;width:111px;background:#e1f1e7"><i style="width:23.0px"></i><b>$670,037</b></div>
<div class="v" style="left:523px;top:720px;width:111px;background:#cae9d5"><i style="width:43.1px"></i><b>$1,255,057</b></div>
<div class="v" style="left:633px;top:720px;width:111px;background:#9bd3ad"><i style="width:70.5px"></i><b>$2,053,278</b></div>
<div class="v" style="left:743px;top:720px;width:111px;background:#63be7b"><i style="width:107.5px"></i><b>$3,130,300</b></div>
<div class="dbl" style="top:719px;left:303px;width:661px"></div>
<div class="dbl" style="top:752px;left:303px;width:550px"></div>
<span class="t" style="left:65.0px;top:765.3px;font-size:12px;color:#000;letter-spacing:-0.30px;transform:scaleX(0.929);transform-origin:0 0;">(*) Total Costs carried forward to Investment Summary worksheet.</span>

<svg class="chart" style="left:997px;top:268px" width="481" height="289" viewBox="0 0 481 289">
<rect x="0.5" y="0.5" width="480" height="288" fill="#fff" stroke="#d9dde6"/>
<line x1="32.5" y1="50" x2="32.5" y2="227" stroke="#d6d9e2" stroke-width="1"/>
<line x1="115.5" y1="50" x2="115.5" y2="227" stroke="#d6d9e2" stroke-width="1"/>
<line x1="199.5" y1="50" x2="199.5" y2="227" stroke="#d6d9e2" stroke-width="1"/>
<line x1="283.5" y1="50" x2="283.5" y2="227" stroke="#d6d9e2" stroke-width="1"/>
<line x1="367.5" y1="50" x2="367.5" y2="227" stroke="#d6d9e2" stroke-width="1"/>
<line x1="451.5" y1="50" x2="451.5" y2="227" stroke="#d6d9e2" stroke-width="1"/>
<rect x="32.0" y="216.9" width="13.1" height="6" fill="#5b9bd5"/>
<rect x="45.1" y="216.9" width="26.2" height="6" fill="#ed7d31"/>
<rect x="71.3" y="216.9" width="39.3" height="6" fill="#a5a5a5"/>
<rect x="110.7" y="216.9" width="52.4" height="6" fill="#ffc000"/>
<rect x="163.1" y="216.9" width="78.7" height="6" fill="#4472c4"/>
<rect x="241.8" y="216.9" width="209.8" height="6" fill="#70ad47"/>
<text x="20.600000000000023" y="223.5" text-anchor="end" class="ct">1</text>
<rect x="32.0" y="202.1" width="11.3" height="6" fill="#5b9bd5"/>
<rect x="43.3" y="202.1" width="28.4" height="6" fill="#ed7d31"/>
<rect x="71.7" y="202.1" width="28.4" height="6" fill="#a5a5a5"/>
<rect x="100.0" y="202.1" width="39.7" height="6" fill="#ffc000"/>
<rect x="139.7" y="202.1" width="102.1" height="6" fill="#4472c4"/>
<rect x="241.8" y="202.1" width="209.8" height="6" fill="#70ad47"/>
<text x="20.600000000000023" y="208.7" text-anchor="end" class="ct">2</text>
<rect x="32.0" y="187.3" width="26.6" height="6" fill="#5b9bd5"/>
<rect x="58.6" y="187.3" width="39.8" height="6" fill="#ed7d31"/>
<rect x="98.4" y="187.3" width="53.1" height="6" fill="#a5a5a5"/>
<rect x="151.5" y="187.3" width="79.7" height="6" fill="#ffc000"/>
<rect x="231.2" y="187.3" width="10.6" height="6" fill="#4472c4"/>
<rect x="241.8" y="187.3" width="209.8" height="6" fill="#70ad47"/>
<text x="20.600000000000023" y="193.9" text-anchor="end" class="ct">3</text>
<rect x="32.0" y="172.4" width="38.1" height="6" fill="#5b9bd5"/>
<rect x="70.1" y="172.4" width="19.1" height="6" fill="#ed7d31"/>
<rect x="89.2" y="172.4" width="31.8" height="6" fill="#a5a5a5"/>
<rect x="121.0" y="172.4" width="44.5" height="6" fill="#ffc000"/>
<rect x="165.5" y="172.4" width="76.3" height="6" fill="#4472c4"/>
<rect x="241.8" y="172.4" width="209.8" height="6" fill="#70ad47"/>
<text x="20.600000000000023" y="179.0" text-anchor="end" class="ct">4</text>
<rect x="32.0" y="157.6" width="14.5" height="6" fill="#5b9bd5"/>
<rect x="46.5" y="157.6" width="21.7" height="6" fill="#ed7d31"/>
<rect x="68.2" y="157.6" width="36.2" height="6" fill="#a5a5a5"/>
<rect x="104.3" y="157.6" width="50.6" height="6" fill="#ffc000"/>
<rect x="155.0" y="157.6" width="86.8" height="6" fill="#4472c4"/>
<rect x="241.8" y="157.6" width="209.8" height="6" fill="#70ad47"/>
<text x="20.600000000000023" y="164.2" text-anchor="end" class="ct">5</text>
<rect x="32.0" y="142.7" width="32.8" height="6" fill="#5b9bd5"/>
<rect x="64.8" y="142.7" width="19.7" height="6" fill="#ed7d31"/>
<rect x="84.4" y="142.7" width="32.8" height="6" fill="#a5a5a5"/>
<rect x="117.2" y="142.7" width="45.9" height="6" fill="#ffc000"/>
<rect x="163.1" y="142.7" width="78.7" height="6" fill="#4472c4"/>
<rect x="241.8" y="142.7" width="209.8" height="6" fill="#70ad47"/>
<text x="20.600000000000023" y="149.3" text-anchor="end" class="ct">6</text>
<rect x="32.0" y="127.9" width="32.8" height="6" fill="#5b9bd5"/>
<rect x="64.8" y="127.9" width="19.7" height="6" fill="#ed7d31"/>
<rect x="84.4" y="127.9" width="32.8" height="6" fill="#a5a5a5"/>
<rect x="117.2" y="127.9" width="45.9" height="6" fill="#ffc000"/>
<rect x="163.1" y="127.9" width="78.7" height="6" fill="#4472c4"/>
<rect x="241.8" y="127.9" width="209.8" height="6" fill="#70ad47"/>
<text x="20.600000000000023" y="134.5" text-anchor="end" class="ct">7</text>
<rect x="32.0" y="113.1" width="20.8" height="6" fill="#5b9bd5"/>
<rect x="52.8" y="113.1" width="41.5" height="6" fill="#ed7d31"/>
<rect x="94.3" y="113.1" width="83.1" height="6" fill="#a5a5a5"/>
<rect x="177.4" y="113.1" width="12.5" height="6" fill="#ffc000"/>
<rect x="189.9" y="113.1" width="51.9" height="6" fill="#4472c4"/>
<rect x="241.8" y="113.1" width="209.8" height="6" fill="#70ad47"/>
<text x="20.600000000000023" y="119.7" text-anchor="end" class="ct">8</text>
<rect x="32.0" y="98.2" width="14.5" height="6" fill="#5b9bd5"/>
<rect x="46.5" y="98.2" width="21.7" height="6" fill="#ed7d31"/>
<rect x="68.2" y="98.2" width="36.2" height="6" fill="#a5a5a5"/>
<rect x="104.3" y="98.2" width="50.6" height="6" fill="#ffc000"/>
<rect x="155.0" y="98.2" width="86.8" height="6" fill="#4472c4"/>
<rect x="241.8" y="98.2" width="209.8" height="6" fill="#70ad47"/>
<text x="20.600000000000023" y="104.8" text-anchor="end" class="ct">9</text>
<rect x="32.0" y="83.4" width="14.5" height="6" fill="#5b9bd5"/>
<rect x="46.5" y="83.4" width="21.7" height="6" fill="#ed7d31"/>
<rect x="68.2" y="83.4" width="36.2" height="6" fill="#a5a5a5"/>
<rect x="104.3" y="83.4" width="50.6" height="6" fill="#ffc000"/>
<rect x="155.0" y="83.4" width="86.8" height="6" fill="#4472c4"/>
<rect x="241.8" y="83.4" width="209.8" height="6" fill="#70ad47"/>
<text x="20.600000000000023" y="90.0" text-anchor="end" class="ct">10</text>
<rect x="32.0" y="68.5" width="18.4" height="6" fill="#5b9bd5"/>
<rect x="50.4" y="68.5" width="26.6" height="6" fill="#ed7d31"/>
<rect x="77.0" y="68.5" width="39.3" height="6" fill="#a5a5a5"/>
<rect x="116.3" y="68.5" width="53.6" height="6" fill="#ffc000"/>
<rect x="169.8" y="68.5" width="72.3" height="6" fill="#4472c4"/>
<rect x="242.1" y="68.5" width="209.5" height="6" fill="#70ad47"/>
<text x="20.600000000000023" y="75.1" text-anchor="end" class="ct">11</text>
<rect x="32.0" y="53.7" width="15.6" height="6" fill="#5b9bd5"/>
<rect x="47.6" y="53.7" width="38.1" height="6" fill="#ed7d31"/>
<rect x="85.7" y="53.7" width="71.3" height="6" fill="#a5a5a5"/>
<rect x="157.0" y="53.7" width="116.7" height="6" fill="#ffc000"/>
<rect x="273.7" y="53.7" width="177.9" height="6" fill="#4472c4"/>
<text x="20.600000000000023" y="60.3" text-anchor="end" class="ct">12</text>
<text x="32.0" y="246" text-anchor="middle" class="ct">0%</text>
<text x="115.9" y="246" text-anchor="middle" class="ct">20%</text>
<text x="199.8" y="246" text-anchor="middle" class="ct">40%</text>
<text x="283.8" y="246" text-anchor="middle" class="ct">60%</text>
<text x="367.7" y="246" text-anchor="middle" class="ct">80%</text>
<text x="451.6" y="246" text-anchor="middle" class="ct">100%</text>
<text x="239.5" y="29" text-anchor="middle" class="ctitle">Chart Title</text>
<rect x="110" y="266" width="7" height="7" fill="#5b9bd5"/>
<text x="119.5" y="272" class="ct">2018</text>
<rect x="154" y="266" width="7" height="7" fill="#ed7d31"/>
<text x="163.5" y="272" class="ct">2019</text>
<rect x="198" y="266" width="7" height="7" fill="#a5a5a5"/>
<text x="207.5" y="272" class="ct">2020</text>
<rect x="243" y="266" width="7" height="7" fill="#ffc000"/>
<text x="252.5" y="272" class="ct">2021</text>
<rect x="287" y="266" width="7" height="7" fill="#4472c4"/>
<text x="296.5" y="272" class="ct">2022</text>
<rect x="331" y="266" width="7" height="7" fill="#70ad47"/>
<text x="340.5" y="272" class="ct">TOTAL</text>
</svg>
<div class="a" style="left:1579px;top:188px;width:21px;height:623px;background:#fff"></div>
<div class="a" style="left:1582px;top:206px;width:15px;height:591px;background:#efedf1"></div>
<div class="a" style="left:1582px;top:191px;width:15px;height:15px;background:#fff;border:1px solid #ababab"></div>
<svg style="left:1586px;top:196px" width="7" height="4" viewBox="0 0 7 4"><path d="M0 4H7L3.5 0Z" fill="#666"/></svg>
<div class="a" style="left:1582px;top:207px;width:15px;height:165px;background:#fff;border:1px solid #ababab"></div>
<div class="a" style="left:1582px;top:797px;width:15px;height:14px;background:#fff;border:1px solid #ababab"></div>
<svg style="left:1586px;top:802px" width="7" height="4" viewBox="0 0 7 4"><path d="M0 0H7L3.5 4Z" fill="#666"/></svg>
</div>
<div class="a" style="left:0;top:811px;width:1600px;height:27px;background:#efedf1"></div>
<svg style="left:26px;top:819px" width="6" height="9" viewBox="0 0 6 9"><path d="M5 0.5 L1 4.5 L5 8.5 Z" fill="#c6c6c6"/></svg>
<svg style="left:55px;top:819px" width="6" height="9" viewBox="0 0 6 9"><path d="M1 0.5 L5 4.5 L1 8.5 Z" fill="#c6c6c6"/></svg>
<div class="a" style="left:100px;top:814px;width:1px;height:20px;background:#ababab"></div>
<div class="a" style="left:157px;top:814px;width:1px;height:20px;background:#ababab"></div>
<div class="a" style="left:207px;top:814px;width:1px;height:20px;background:#ababab"></div>
<div class="a" style="left:260px;top:814px;width:1px;height:20px;background:#ababab"></div>
<div class="a" style="left:303px;top:814px;width:1px;height:20px;background:#ababab"></div>
<div class="a" style="left:482px;top:814px;width:1px;height:20px;background:#ababab"></div>
<div class="a" style="left:370px;top:810px;width:57px;height:25px;background:#fff;border-left:1px solid #ababab;border-right:1px solid #ababab;border-bottom:2px solid #217346"></div>
<span class="t" style="left:112.5px;top:816.8px;font-size:13px;color:#444;letter-spacing:-0.30px;transform:scaleX(0.974);transform-origin:0 0;">Costs</span>
<span class="t" style="left:169.3px;top:816.8px;font-size:13px;color:#444;letter-spacing:-0.30px;transform:scaleX(0.948);transform-origin:0 0;">Bars</span>
<span class="t" style="left:220.3px;top:816.8px;font-size:13px;color:#444;letter-spacing:-0.29px;">Data</span>
<span class="t" style="left:272.8px;top:816.8px;font-size:13px;color:#444;letter-spacing:-0.30px;transform:scaleX(0.945);transform-origin:0 0;">Pie</span>
<span class="t" style="left:316.2px;top:816.8px;font-size:13px;color:#444;letter-spacing:-0.18px;">Bubble</span>
<span class="t" style="left:439.4px;top:816.8px;font-size:13px;color:#444;letter-spacing:-0.29px;">Chart</span>
<span class="t" style="left:382.8px;top:816.8px;font-size:13px;color:#217346;letter-spacing:-0.30px;font-weight:700;transform:scaleX(0.963);transform-origin:0 0;">Lines</span>
<svg style="left:515px;top:815px" width="18" height="18" viewBox="0 0 18 18"><circle cx="8.8" cy="8.8" r="7.2" fill="none" stroke="#777" stroke-width="1.1"/><path d="M8.8 4.8 V12.8 M4.8 8.8 H12.8" stroke="#555" stroke-width="2"/></svg>
<div class="a" style="left:960px;top:818px;width:2px;height:2px;background:#b5b5b5;box-shadow:0 4px 0 #b5b5b5,0 8px 0 #b5b5b5"></div>
<div class="a" style="left:977px;top:818px;width:602px;height:14px;background:#e3e3e3"></div>
<div class="a" style="left:977px;top:817px;width:16px;height:15px;background:#fff;border:1px solid #ababab"></div>
<svg style="left:982px;top:820px" width="6" height="9" viewBox="0 0 6 9"><path d="M5 0.5 L1 4.5 L5 8.5 Z" fill="#666"/></svg>
<div class="a" style="left:992px;top:817px;width:517px;height:15px;background:#fff;border:1px solid #ababab"></div>
<div class="a" style="left:1564px;top:817px;width:15px;height:15px;background:#fff;border:1px solid #ababab"></div>
<svg style="left:1569px;top:820px" width="6" height="9" viewBox="0 0 6 9"><path d="M1 0.5 L5 4.5 L1 8.5 Z" fill="#666"/></svg>
<div class="a" style="left:0;top:838px;width:1600px;height:23px;background:#217346"></div>
<div class="a" style="left:0;top:860px;width:1600px;height:1px;background:#0c2a1a"></div>
<span class="t" style="left:7.5px;top:843.3px;font-size:12px;color:#fff;letter-spacing:-0.30px;transform:scaleX(0.816);transform-origin:0 0;">READY</span>
<svg style="left:60px;top:842px" width="14" height="14" viewBox="0 0 14 14"><path d="M5 1.9H12.5V12.3H1.5V6" fill="none" stroke="#fff" stroke-width="1.2"/><path d="M6 2.2H12.5" stroke="#fff" stroke-width="2"/><path d="M3.4 6.9H5.6M6.6 6.9H8.8M9.6 6.9H11.6M3.4 8.8H5.6M6.6 8.8H8.8M9.6 8.8H11.6M3.4 10.7H5.6M6.6 10.7H8.8M9.6 10.7H11.6" stroke="#fff" stroke-width="0.9"/><circle cx="2.9" cy="3" r="3" fill="#e2efe7"/></svg><div class="a" style="left:1308px;top:838px;width:38px;height:22px;background:#185c37"></div><svg style="left:1320px;top:842px" width="14" height="13" viewBox="0 0 14 13"><path d="M0.5 0.5H13.5V12.5H0.5ZM4.8 0.5V12.5M9.2 0.5V12.5M0.5 4.5H13.5M0.5 8.5H13.5" fill="none" stroke="#fff" stroke-width="1"/></svg><svg style="left:1358px;top:842px" width="15" height="13" viewBox="0 0 15 13"><rect x="0.5" y="0.5" width="13.5" height="12" fill="none" stroke="#fff"/><rect x="3.5" y="3.5" width="7.5" height="6.5" fill="none" stroke="#fff"/><path d="M5 5.5H9.5M5 7.5H9.5" stroke="#fff" stroke-width="0.9"/></svg><svg style="left:1396px;top:842px" width="15" height="13" viewBox="0 0 15 13"><rect x="0.5" y="0.5" width="13.5" height="12" fill="none" stroke="#fff"/><rect x="1" y="1" width="3.6" height="6.2" fill="#fff"/><rect x="5.4" y="1" width="3" height="6.2" fill="#fff"/><path d="M8.9 1V7.2" stroke="#fff" stroke-width="0.8"/></svg><div class="a" style="left:1427px;top:848px;width:6px;height:2px;background:#fff"></div><div class="a" style="left:1437px;top:848px;width:100px;height:1px;background:#fff"></div><div class="a" style="left:1485px;top:843px;width:4px;height:11px;background:#fff"></div><div class="a" style="left:1541px;top:848px;width:8px;height:2px;background:#fff"></div><div class="a" style="left:1544px;top:845px;width:2px;height:8px;background:#fff"></div>
<span class="t" style="left:1566.0px;top:843.3px;font-size:12px;color:#fff;letter-spacing:-0.30px;transform:scaleX(0.882);transform-origin:0 0;">100%</span>
</div>
</body></html>
